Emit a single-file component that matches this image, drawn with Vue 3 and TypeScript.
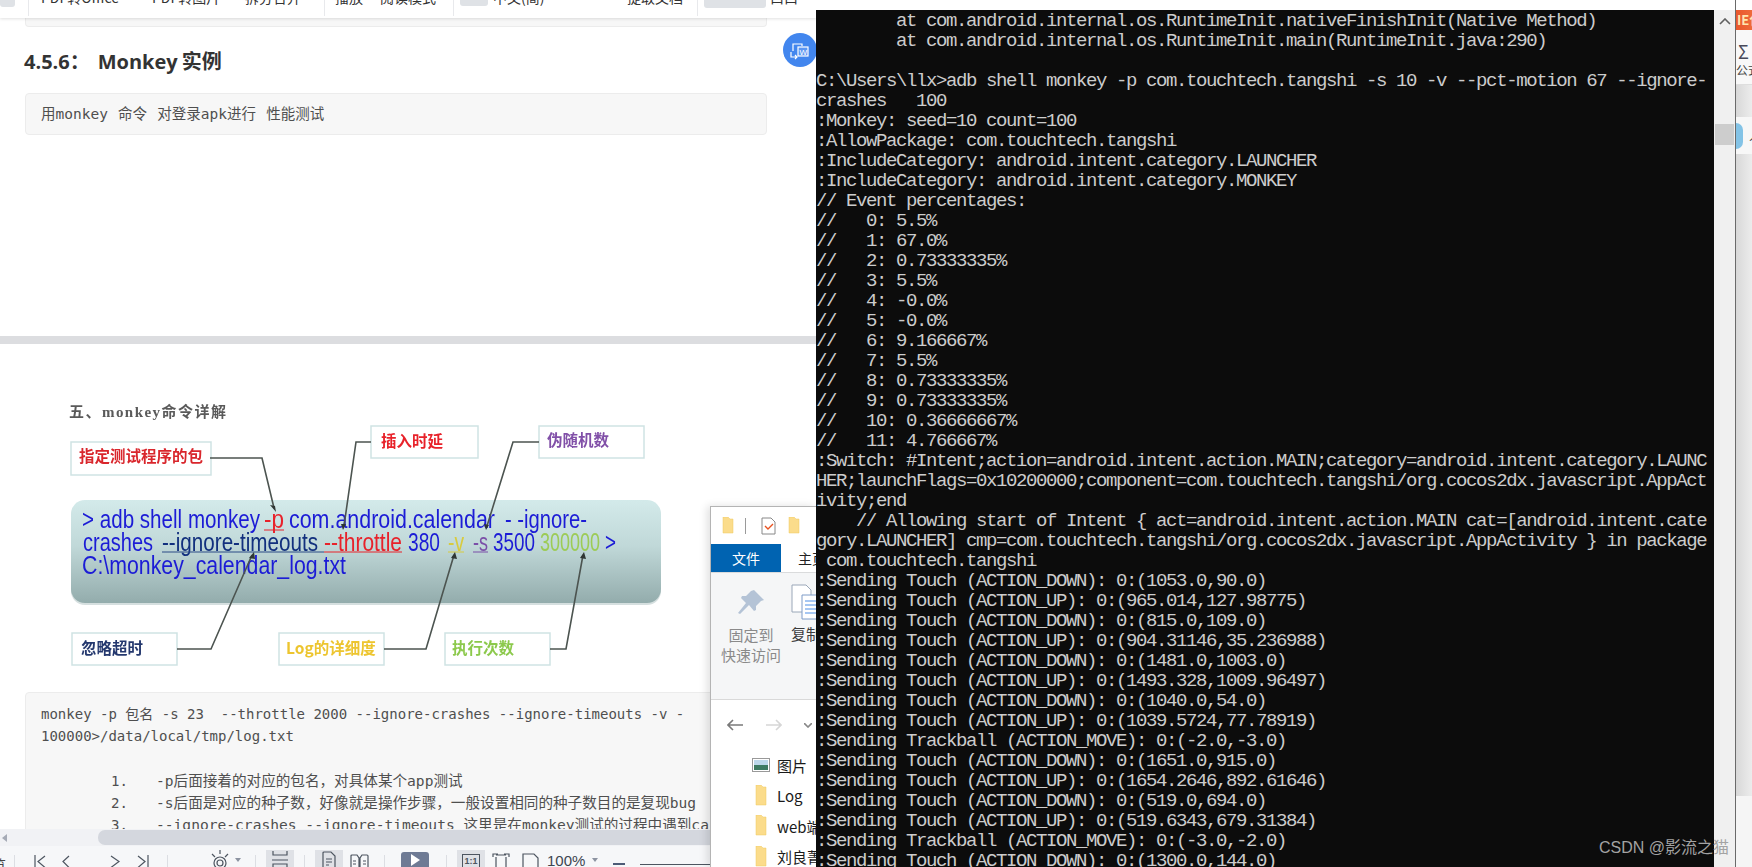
<script setup lang="ts">
// 终端窗口里的输出，每行一条
const terminalLines: string[] = [
  '        at com.android.internal.os.RuntimeInit.nativeFinishInit(Native Method)',
  '        at com.android.internal.os.RuntimeInit.main(RuntimeInit.java:290)',
  '',
  'C:\\Users\\llx>adb shell monkey -p com.touchtech.tangshi -s 10 -v --pct-motion 67 --ignore-',
  'crashes   100',
  ':Monkey: seed=10 count=100',
  ':AllowPackage: com.touchtech.tangshi',
  ':IncludeCategory: android.intent.category.LAUNCHER',
  ':IncludeCategory: android.intent.category.MONKEY',
  '// Event percentages:',
  '//   0: 5.5%',
  '//   1: 67.0%',
  '//   2: 0.73333335%',
  '//   3: 5.5%',
  '//   4: -0.0%',
  '//   5: -0.0%',
  '//   6: 9.166667%',
  '//   7: 5.5%',
  '//   8: 0.73333335%',
  '//   9: 0.73333335%',
  '//   10: 0.36666667%',
  '//   11: 4.766667%',
  ':Switch: #Intent;action=android.intent.action.MAIN;category=android.intent.category.LAUNC',
  'HER;launchFlags=0x10200000;component=com.touchtech.tangshi/org.cocos2dx.javascript.AppAct',
  'ivity;end',
  '    // Allowing start of Intent { act=android.intent.action.MAIN cat=[android.intent.cate',
  'gory.LAUNCHER] cmp=com.touchtech.tangshi/org.cocos2dx.javascript.AppActivity } in package',
  ' com.touchtech.tangshi',
  ':Sending Touch (ACTION_DOWN): 0:(1053.0,90.0)',
  ':Sending Touch (ACTION_UP): 0:(965.014,127.98775)',
  ':Sending Touch (ACTION_DOWN): 0:(815.0,109.0)',
  ':Sending Touch (ACTION_UP): 0:(904.31146,35.236988)',
  ':Sending Touch (ACTION_DOWN): 0:(1481.0,1003.0)',
  ':Sending Touch (ACTION_UP): 0:(1493.328,1009.96497)',
  ':Sending Touch (ACTION_DOWN): 0:(1040.0,54.0)',
  ':Sending Touch (ACTION_UP): 0:(1039.5724,77.78919)',
  ':Sending Trackball (ACTION_MOVE): 0:(-2.0,-3.0)',
  ':Sending Touch (ACTION_DOWN): 0:(1651.0,915.0)',
  ':Sending Touch (ACTION_UP): 0:(1654.2646,892.61646)',
  ':Sending Touch (ACTION_DOWN): 0:(519.0,694.0)',
  ':Sending Touch (ACTION_UP): 0:(519.6343,679.31384)',
  ':Sending Trackball (ACTION_MOVE): 0:(-3.0,-2.0)',
  ':Sending Touch (ACTION_DOWN): 0:(1300.0,144.0)'
];

// 示意图里的引线
const leaders: string[] = [
  '210,458 262,458 274,508',
  '371,442 356,442 344,526',
  '539,442 513,442 487,526',
  '177,649 211,649 252,555',
  '384,649 426,649 454,555',
  '550,649 566,649 583,555'
];

const notes = [
  { no: '1.', text: '-p后面接着的对应的包名，对具体某个app测试' },
  { no: '2.', text: '-s后面是对应的种子数，好像就是操作步骤，一般设置相同的种子数目的是复现bug' },
  { no: '3.', text: '--ignore-crashes --ignore-timeouts 这里是在monkey测试的过程中遇到ca' }
];

const treeFolders = ['Log', 'web端测试', '刘良菁'];
</script>

<template>
  <div class="desktop">
    <!-- 左边的文档阅读器 -->
    <section class="reader">
      <header class="top-bar">
        <div class="top-cell cell-a"><i class="grey-chip chip-a"></i></div>
        <div class="top-cell cell-b">
          <span class="w-111">PDF转Office</span>
          <span class="w-93">PDF转图片</span>
          <span>拆分合并</span>
        </div>
        <div class="top-cell cell-c">
          <span class="w-45">播放</span>
          <span>阅读模式</span>
        </div>
        <div class="top-cell cell-d">
          <i class="grey-chip chip-d"></i>
          <span class="w-134">中文(简)</span>
          <span>提取文档</span>
        </div>
        <div class="top-cell cell-e">
          <i class="grey-chip chip-e"></i>
          <span>口口</span>
        </div>
      </header>

      <div class="page page-one">
        <div class="box-tail"></div>
        <h2 class="section-title">4.5.6：&nbsp; Monkey 实例</h2>
        <div class="quote-box">用monkey 命令 对登录apk进行 性能测试</div>
      </div>

      <div class="page-gap"></div>

      <div class="page page-two">
        <svg class="figure" viewBox="60 400 620 280" width="620" height="280">
          <defs>
            <linearGradient id="band" x1="0" y1="0" x2="0" y2="1">
              <stop offset="0" stop-color="#d3eaea" />
              <stop offset="0.45" stop-color="#c0d8d8" />
              <stop offset="1" stop-color="#93acac" />
            </linearGradient>
          </defs>
          <text x="69" y="417" textLength="157" class="fig-title">五、monkey命令详解</text>

          <rect x="71" y="502" width="590" height="103" rx="14" fill="#b9c9c9" opacity="0.6" />
          <rect x="71" y="500" width="590" height="103" rx="14" fill="url(#band)" />

          <g class="cmd">
            <text x="82" y="528" textLength="178" lengthAdjust="spacingAndGlyphs">&gt; adb shell monkey</text>
            <text x="264" y="528" textLength="20" lengthAdjust="spacingAndGlyphs" fill="#e8222a">-p</text>
            <text x="289" y="528" textLength="206" lengthAdjust="spacingAndGlyphs">com.android.calendar</text>
            <text x="505" y="528" textLength="82" lengthAdjust="spacingAndGlyphs">- -ignore-</text>
            <text x="83" y="551" textLength="70" lengthAdjust="spacingAndGlyphs">crashes</text>
            <text x="162" y="551" textLength="156" lengthAdjust="spacingAndGlyphs" fill="#12307e">--ignore-timeouts</text>
            <text x="324" y="551" textLength="78" lengthAdjust="spacingAndGlyphs" fill="#e8222a">--throttle</text>
            <text x="408" y="551" textLength="32" lengthAdjust="spacingAndGlyphs">380</text>
            <text x="448" y="551" textLength="16" lengthAdjust="spacingAndGlyphs" fill="#d8cb3e">-v</text>
            <text x="473" y="551" textLength="15" lengthAdjust="spacingAndGlyphs" fill="#7b4fa8">-s</text>
            <text x="493" y="551" textLength="42" lengthAdjust="spacingAndGlyphs">3500</text>
            <text x="540" y="551" textLength="60" lengthAdjust="spacingAndGlyphs" fill="#9ccb55">300000</text>
            <text x="605" y="551" textLength="11" lengthAdjust="spacingAndGlyphs">&gt;</text>
            <text x="82" y="574" textLength="264" lengthAdjust="spacingAndGlyphs">C:\monkey_calendar_log.txt</text>
          </g>
          <line x1="264" y1="530" x2="284" y2="530" stroke="#e8222a" />
          <line x1="162" y1="552" x2="324" y2="552" stroke="#2b4a86" />
          <line x1="324" y1="552" x2="402" y2="552" stroke="#e8222a" />
          <line x1="448" y1="552" x2="464" y2="552" stroke="#d8cb3e" />
          <line x1="473" y1="552" x2="488" y2="552" stroke="#7b4fa8" />

          <g class="tag">
            <rect x="71" y="442" width="140" height="33" />
            <rect x="371" y="426" width="107" height="32" />
            <rect x="539" y="426" width="105" height="32" />
            <rect x="72" y="633" width="105" height="32" />
            <rect x="279" y="633" width="105" height="32" />
            <rect x="445" y="633" width="105" height="32" />
          </g>
          <g class="tag-text">
            <text x="79" y="462" fill="#d9262c">指定测试程序的包</text>
            <text x="381" y="447" fill="#e8222a">插入时延</text>
            <text x="547" y="446" fill="#8150a8">伪随机数</text>
            <text x="81" y="654" fill="#24386e">忽略超时</text>
            <text x="286" y="654" fill="#edc52f">Log的详细度</text>
            <text x="452" y="654" fill="#8cc94c">执行次数</text>
          </g>

          <polyline v-for="points in leaders" :key="points" :points="points" class="leader" />
          <path class="head" d="M270 505l5 1 1 6zM341 524l5 0-3 6zM484 524l5 1-3 5zM249 558l5-6 1 7zM451 558l4-6 2 7zM580 558l4-6 2 7z" />
        </svg>

        <div class="code-box">
          <div>monkey -p 包名 -s 23&nbsp; --throttle 2000 --ignore-crashes --ignore-timeouts -v -</div>
          <div>100000&gt;/data/local/tmp/log.txt</div>
          <div class="blank"></div>
          <div v-for="note in notes" :key="note.no" class="note">
            <span class="note-no">{{ note.no }}</span>
            <span class="note-text">{{ note.text }}</span>
          </div>
        </div>
      </div>

      <div class="h-scroll">
        <i class="arrow-left"></i>
        <i class="h-thumb"></i>
      </div>

      <footer class="bottom-bar">
        <span class="cut-word">览</span>
        <i class="tb-sep ml-8"></i>
        <svg class="tb-icon ml-19" width="12" height="13" viewBox="0 0 12 13"><path d="M1 0v13M11 1 4 6.5l7 6" /></svg>
        <svg class="tb-icon ml-16" width="8" height="13" viewBox="0 0 8 13"><path d="M7 1 1 6.5l6 6" /></svg>
        <svg class="tb-icon ml-40" width="10" height="13" viewBox="0 0 10 13"><path d="m1 1 8 5.5-8 6" /></svg>
        <svg class="tb-icon ml-17" width="12" height="13" viewBox="0 0 12 13"><path d="M11 0v13M1 1l7 5.5-7 6" /></svg>
        <i class="tb-sep ml-18"></i>
        <svg class="tb-icon ml-42" width="20" height="18" viewBox="0 0 20 18"><circle cx="10" cy="13" r="6" /><circle cx="10" cy="13" r="3" /><path d="M10 0v4M2 4l3 3M18 4l-3 3" /></svg>
        <i class="caret ml-5"></i>
        <i class="tb-sep ml-14"></i>
        <div class="tb-hi ml-10">
          <svg class="tb-icon" width="18" height="17" viewBox="0 0 18 17"><path d="M2 0v4h14V0M1 9h16M2 17v-4h14v4" /></svg>
        </div>
        <i class="tb-sep ml-10"></i>
        <div class="tb-hi ml-10">
          <svg class="tb-icon" width="14" height="17" viewBox="0 0 14 17"><path d="M1 17V2q0-1 1-1h7l4 4v12M4 8h6M4 11h6M4 14h3" /></svg>
        </div>
        <svg class="tb-icon ml-6" width="21" height="14" viewBox="0 0 21 14"><path d="M2 14V2q0-1 1-1h5l2 3v10M11 14V4l2-3h5q1 0 1 1v12M4 7h3M14 7h3M4 10h3M14 10h3" /></svg>
        <i class="tb-sep ml-14"></i>
        <div class="tb-play ml-16"><i></i></div>
        <i class="tb-sep ml-17"></i>
        <div class="tb-hi ml-10">
          <span class="one-one">1:1</span>
        </div>
        <svg class="tb-icon ml-7" width="18" height="15" viewBox="0 0 18 15"><path d="M1 4V1h5M12 1h5v3M4 4v11M14 4v11M4 2h10" /></svg>
        <svg class="tb-icon ml-12" width="17" height="15" viewBox="0 0 17 15"><path d="M1 15V1h11l4 4v10" /></svg>
        <span class="zoom-text ml-8">100%</span>
        <i class="caret ml-6"></i>
        <i class="minus ml-15"></i>
        <i class="slider ml-15"></i>
      </footer>

      <div class="word-badge">
        <svg width="24" height="24" viewBox="0 0 24 24" fill="none" stroke="#fff" stroke-width="1.2">
          <path d="M5 13V6h9v2" />
          <rect x="10" y="9" width="10" height="9" fill="#5d97f2" />
          <text x="11.4" y="16.6" class="badge-w">W</text>
          <path d="M3 14v5h6m-2-2 2 2-2 2" />
        </svg>
      </div>
    </section>

    <!-- 资源管理器窗口，被终端盖住一半 -->
    <section class="explorer">
      <div class="qat">
        <svg class="folder-icon" width="12" height="17" viewBox="0 0 12 17"><path d="M1 0h5l2 2h3v14H1z" /></svg>
        <i class="qat-sep"></i>
        <svg width="15" height="18" viewBox="0 0 15 18"><path d="M1 1h9l4 4v12H1z" fill="#fff" stroke="#888" /><path d="m4 9 3 3 5-5" fill="none" stroke="#e8521f" stroke-width="1.4" /></svg>
        <svg class="folder-icon" width="12" height="17" viewBox="0 0 12 17"><path d="M1 0h5l2 2h3v14H1z" /></svg>
      </div>
      <div class="tabs">
        <span class="tab-file">文件</span>
        <span class="tab-home">主页</span>
      </div>
      <div class="ribbon">
        <div class="ribbon-btn pin-btn">
          <svg width="28" height="28" viewBox="0 0 28 28"><path d="M17 1l10 10-3 1-5 5 0 4-2 1-5-6-9 9-2-1 8-10-5-5 1-2 4 0 5-5z" fill="#b4c3d6" /></svg>
          <span>固定到</span>
          <span>快速访问</span>
        </div>
        <div class="ribbon-btn copy-btn">
          <svg width="30" height="36" viewBox="0 0 30 36"><path d="M1 1h14l5 5v22H1z" fill="#fff" stroke="#9aa7b8" /><path d="M11 11h18v24H11z" fill="#fff" stroke="#7f9cc8" /><path d="M14 17h13M14 21h13M14 25h13M14 29h13" stroke="#4f8fe6" /></svg>
          <span>复制</span>
        </div>
      </div>
      <div class="nav-row">
        <svg width="16" height="12" viewBox="0 0 16 12" class="nav-back"><path d="M16 6H2m4-5L1 6l5 5" /></svg>
        <svg width="16" height="12" viewBox="0 0 16 12" class="nav-next"><path d="M0 6h14m-4-5 5 5-5 5" /></svg>
        <svg width="8" height="5" viewBox="0 0 8 5" class="nav-down"><path d="m0 0 4 4 4-4" /></svg>
      </div>
      <ul class="tree">
        <li>
          <svg width="18" height="14" viewBox="0 0 18 14"><rect x="0.5" y="0.5" width="17" height="13" fill="#fff" stroke="#999" /><rect x="2" y="2" width="14" height="5" fill="#bcd7ea" /><rect x="2" y="7" width="14" height="5" fill="#3d7a62" /></svg>
          <span>图片</span>
        </li>
        <li v-for="name in treeFolders" :key="name">
          <svg class="folder-icon tree-folder" width="12" height="22" viewBox="0 0 12 22"><path d="M1 0h5l2 2h3v18H1z" /></svg>
          <span>{{ name }}</span>
        </li>
      </ul>
    </section>

    <!-- 命令行窗口 -->
    <section class="terminal">
      <div class="term-title"></div>
      <div class="term-main">
        <div class="term-body">
          <div v-for="(line, index) in terminalLines" :key="index" class="term-line">{{ line }}</div>
        </div>
        <div class="term-scroll">
          <svg width="12" height="7" viewBox="0 0 12 7"><path d="m1 6 5-5 5 5" fill="none" stroke="#606060" stroke-width="1.6" /></svg>
          <i class="term-thumb"></i>
        </div>
      </div>
    </section>

    <!-- 最右边露出的另一个窗口 -->
    <aside class="side-sliver">
      <div class="sliver-top"></div>
      <div class="sliver-banner">IE包</div>
      <div class="sliver-tool">
        <span class="sigma">Σ</span>
        <span class="formula">公式</span>
      </div>
      <div class="sliver-grey"></div>
      <div class="sliver-card"><i class="sliver-dot"></i><span>人</span></div>
      <div class="sliver-grey sliver-long"></div>
      <div class="sliver-end"></div>
    </aside>

    <div class="watermark">CSDN @影流之猫</div>
  </div>
</template>

<style scoped>
.desktop {
  position: relative;
  width: 1752px;
  height: 867px;
  overflow: hidden;
  background: #fff;
  font-family: "Noto Sans CJK SC", "Noto Sans", sans-serif;
}

/* 阅读器 */
.reader {
  position: absolute;
  left: 0;
  top: 0;
  width: 816px;
  height: 867px;
  display: flex;
  flex-direction: column;
  overflow: hidden;
}

.top-bar {
  flex: none;
  height: 18px;
  display: flex;
  overflow: hidden;
  background: #fff;
  box-shadow: 0 1px 3px rgba(0, 0, 0, 0.12);
  position: relative;
  z-index: 1;
  font-size: 14px;
  line-height: 20px;
  color: #333;
}

.top-cell {
  display: flex;
  align-items: flex-start;
  height: 16px;
  border-left: 1px solid #e8e9ec;
  box-sizing: border-box;
}

.top-cell span {
  margin-top: -13px;
  white-space: nowrap;
}

.cell-a { width: 28px; border-left: none; }
.cell-b { width: 296px; padding-left: 12px; }
.cell-c { width: 129px; padding-left: 10px; }
.cell-d { width: 244px; padding-left: 6px; }
.cell-e { width: 119px; padding-left: 6px; }

.w-111 { width: 111px; }
.w-93 { width: 93px; }
.w-45 { width: 45px; }
.w-134 { width: 134px; margin-left: 5px; }

.grey-chip {
  display: block;
  flex: none;
  background: #dfe2e6;
  border-radius: 0 0 3px 3px;
}

.chip-a { width: 15px; height: 7px; }
.chip-d { width: 28px; height: 6px; }
.chip-e { width: 62px; height: 8px; margin-right: 4px; }

.page {
  background: #fff;
}

.page-one {
  flex: none;
  height: 318px;
}

.box-tail {
  width: 742px;
  height: 9px;
  margin-left: 25px;
  box-sizing: border-box;
  background: #f7f7f7;
  border: 1px solid #ececec;
  border-top: none;
  border-radius: 0 0 4px 4px;
}

.section-title {
  margin: 20px 0 0 24px;
  height: 37px;
  font-size: 20px;
  line-height: 30px;
  font-weight: 700;
  word-spacing: -1.2px;
  color: #333;
  font-family: "Open Sans", "Noto Sans CJK SC", sans-serif;
}

.quote-box {
  margin: 0 0 0 25px;
  width: 742px;
  height: 42px;
  box-sizing: border-box;
  margin-top: 9px;
  padding: 0 15px;
  background: #f7f7f7;
  border: 1px solid #ececec;
  border-radius: 4px;
  font-family: "DejaVu Sans Mono", "Noto Sans CJK SC", monospace;
  font-size: 14.5px;
  word-spacing: 1.5px;
  line-height: 40px;
  color: #4f4f4f;
  white-space: pre;
}

.page-gap {
  flex: none;
  height: 8px;
  background: #dcdde0;
}

.page-two {
  flex: 1;
  min-height: 0;
  overflow: hidden;
}

.figure {
  display: block;
  margin: 56px 0 0 60px;
  filter: blur(0.5px);
}

.fig-title {
  font-family: "Liberation Serif", "Noto Sans CJK SC", serif;
  font-size: 15px;
  font-weight: 700;
  fill: #5a5a5a;
}

.cmd text {
  font-family: "Liberation Sans", sans-serif;
  font-size: 25px;
  fill: #1c1cd6;
}

.cmd text[fill="#e8222a"] { fill: #e8222a; }
.cmd text[fill="#12307e"] { fill: #12307e; }
.cmd text[fill="#d8cb3e"] { fill: #d8cb3e; }
.cmd text[fill="#7b4fa8"] { fill: #7b4fa8; }
.cmd text[fill="#9ccb55"] { fill: #9ccb55; }

.tag rect {
  fill: #fff;
  stroke: #cfe3e4;
  stroke-width: 1.5;
}

.tag-text text {
  font-size: 15.5px;
  font-weight: 700;
}

.leader {
  fill: none;
  stroke: #4c5450;
  stroke-width: 1.6;
}

.head {
  fill: #2f3634;
}

.code-box {
  margin: 12px 0 0 25px;
  width: 742px;
  box-sizing: border-box;
  padding: 10px 15px 0;
  background: #f7f7f7;
  border: 1px solid #ececec;
  border-radius: 4px;
  font-family: "DejaVu Sans Mono", "Noto Sans CJK SC", monospace;
  font-size: 14px;
  line-height: 22px;
  color: #4f4f4f;
  white-space: nowrap;
}

.blank {
  height: 23px;
}

.note {
  display: flex;
  line-height: 22px;
}

.note-no {
  width: 45px;
  margin-left: 70px;
  flex: none;
}

.note-text {
  font-size: 14.6px;
}

.h-scroll {
  flex: none;
  height: 17px;
  display: flex;
  align-items: center;
  background: #f1f2f5;
  position: relative;
  z-index: 1;
}

.arrow-left {
  width: 0;
  height: 0;
  margin-left: 2px;
  border: 4px solid transparent;
  border-right: 5px solid #a6abb6;
  border-left: none;
}

.h-thumb {
  margin-left: 91px;
  flex: 1;
  height: 15px;
  background: #d4d7de;
  border-radius: 7px 0 0 7px;
}

.bottom-bar {
  flex: none;
  height: 21px;
  display: flex;
  align-items: flex-end;
  overflow: hidden;
  background: #f6f7f9;
  position: relative;
  z-index: 1;
}

.cut-word {
  width: 14px;
  margin-left: -8px;
  font-size: 14px;
  line-height: 14px;
  margin-bottom: -4px;
  color: #444;
}

.tb-sep {
  flex: none;
  width: 1px;
  height: 12px;
  background: #dcdee3;
}

.tb-icon {
  flex: none;
  margin-bottom: -1px;
  fill: none;
  stroke: #4d5560;
  stroke-width: 1.2;
}

.tb-hi {
  flex: none;
  width: 28px;
  height: 17px;
  display: flex;
  align-items: flex-end;
  justify-content: center;
  background: #dfe1e6;
}

.tb-play {
  flex: none;
  width: 28px;
  height: 15px;
  display: flex;
  align-items: flex-end;
  justify-content: center;
  background: #6e7a94;
  border-radius: 3px 3px 0 0;
}

.tb-play i {
  width: 0;
  height: 0;
  margin-bottom: 1px;
  border-left: 9px solid #fff;
  border-top: 6px solid transparent;
  border-bottom: 6px solid transparent;
}

.one-one {
  width: 18px;
  height: 13px;
  box-sizing: border-box;
  border: 1px solid #4d5560;
  border-bottom: none;
  font-family: "Liberation Sans", sans-serif;
  font-size: 9px;
  font-weight: 700;
  line-height: 13px;
  text-align: center;
  color: #4d5560;
}

.zoom-text {
  width: 39px;
  font-family: "Liberation Sans", sans-serif;
  font-size: 15px;
  line-height: 16px;
  margin-bottom: -2px;
  color: #3d4550;
}

.caret {
  flex: none;
  width: 0;
  height: 0;
  margin-bottom: 5px;
  border-top: 4px solid #8c93a1;
  border-left: 3px solid transparent;
  border-right: 3px solid transparent;
}

.minus {
  flex: none;
  width: 12px;
  height: 2px;
  margin-bottom: 2px;
  background: #4d5b76;
}

.slider {
  flex: none;
  width: 70px;
  height: 1px;
  margin-bottom: 2px;
  background: #4d5560;
}

.ml-5 { margin-left: 5px; }
.ml-6 { margin-left: 6px; }
.ml-7 { margin-left: 7px; }
.ml-8 { margin-left: 8px; }
.ml-10 { margin-left: 10px; }
.ml-12 { margin-left: 12px; }
.ml-14 { margin-left: 14px; }
.ml-15 { margin-left: 15px; }
.ml-16 { margin-left: 16px; }
.ml-17 { margin-left: 17px; }
.ml-18 { margin-left: 18px; }
.ml-19 { margin-left: 19px; }
.ml-40 { margin-left: 40px; }
.ml-42 { margin-left: 42px; }

.word-badge {
  position: absolute;
  left: 783px;
  top: 33px;
  width: 34px;
  height: 34px;
  display: flex;
  align-items: center;
  justify-content: center;
  border-radius: 50%;
  background: #4286ee;
  z-index: 2;
}

.badge-w {
  font-family: "Liberation Sans", sans-serif;
  font-size: 8px;
  fill: #fff;
  stroke: none;
}

/* 资源管理器 */
.explorer {
  position: absolute;
  left: 710px;
  top: 506px;
  width: 106px;
  height: 361px;
  box-sizing: border-box;
  overflow: hidden;
  background: #fff;
  border-left: 1px solid #b4b4b4;
  border-top: 1px solid #b4b4b4;
  box-shadow: -3px 0 8px rgba(0, 0, 0, 0.12);
  z-index: 3;
}

.qat {
  height: 37px;
  display: flex;
  align-items: center;
  padding-left: 11px;
  gap: 11px;
}

.qat-sep {
  width: 1px;
  height: 16px;
  background: #9a9a9a;
  margin-right: 4px;
}

.folder-icon path {
  fill: #fbdc8b;
  stroke: #efc862;
  stroke-width: 0.5;
}

.qat svg:last-child {
  margin-left: 1px;
}

.tabs {
  height: 28px;
  display: flex;
  font-size: 14px;
  line-height: 28px;
}

.tab-file {
  flex: none;
  width: 70px;
  text-align: center;
  background: #0063b1;
  color: #fff;
}

.tab-home {
  flex: none;
  padding-left: 17px;
  color: #222;
  white-space: nowrap;
}

.ribbon {
  height: 128px;
  box-sizing: border-box;
  display: flex;
  background: #f5f6f7;
  border-top: 1px solid #dadbdc;
  border-bottom: 1px solid #d9d9d9;
  font-size: 15px;
  line-height: 20px;
}

.ribbon-btn {
  display: flex;
  flex-direction: column;
  align-items: center;
  flex: none;
  white-space: nowrap;
}

.pin-btn {
  width: 80px;
  padding-top: 16px;
  color: #8a8a8a;
}

.pin-btn svg {
  margin-bottom: 8px;
}

.copy-btn {
  width: 40px;
  margin-left: -5px;
  padding-top: 11px;
  color: #3c3c3c;
}

.copy-btn svg {
  margin-bottom: 4px;
}

.nav-row {
  height: 50px;
  display: flex;
  align-items: center;
  padding-left: 16px;
}

.nav-row svg {
  fill: none;
  stroke-width: 1.6;
}

.nav-back { stroke: #7a7a7a; }
.nav-next { stroke: #d6d6d6; margin-left: 23px; }
.nav-down { stroke: #888; margin-left: 22px; }

.tree {
  list-style: none;
  margin: 0;
  padding: 0 0 0 41px;
  font-size: 15px;
  color: #1a1a1a;
}

.tree li {
  height: 30.5px;
  display: flex;
  align-items: center;
  white-space: nowrap;
}

.tree li svg {
  flex: none;
}

.tree li span {
  margin-left: 7px;
}

.tree-folder {
  margin: 0 3px;
}

/* 命令行 */
.terminal {
  position: absolute;
  left: 816px;
  top: 0;
  width: 920px;
  height: 867px;
  box-sizing: border-box;
  display: flex;
  flex-direction: column;
  background: #fff;
  border-right: 1px solid #6a6a6a;
  z-index: 4;
}

.term-title {
  flex: none;
  height: 10px;
}

.term-main {
  flex: 1;
  min-height: 0;
  display: flex;
}

.term-body {
  width: 898px;
  flex: none;
  box-sizing: border-box;
  padding-top: 1px;
  overflow: hidden;
  background: #0c0c0c;
  color: #cccccc;
  font-family: "Liberation Mono", monospace;
  font-size: 19px;
  letter-spacing: -1.4px;
  line-height: 20px;
}

.term-line {
  height: 20px;
  white-space: pre;
}

.term-scroll {
  flex: 1;
  display: flex;
  flex-direction: column;
  align-items: center;
  padding-top: 8px;
  background: #f0f0f0;
}

.term-thumb {
  width: 19px;
  height: 21px;
  margin-top: 99px;
  background: #cdcdcd;
}

/* 右侧窗口 */
.side-sliver {
  position: absolute;
  left: 1736px;
  top: 0;
  width: 16px;
  height: 867px;
  display: flex;
  flex-direction: column;
  overflow: hidden;
  background: #fff;
}

.sliver-top {
  flex: none;
  height: 10px;
}

.sliver-banner {
  flex: none;
  height: 20px;
  padding-left: 1px;
  background: linear-gradient(90deg, #e9572c, #ee6a3a);
  color: #ffe6b0;
  font-size: 13px;
  font-weight: 700;
  line-height: 20px;
  white-space: nowrap;
}

.sliver-tool {
  flex: none;
  height: 55px;
  display: flex;
  flex-direction: column;
  box-sizing: border-box;
  padding-left: 2px;
  background: #f8f8f8;
  border-bottom: 1px solid #dedede;
  white-space: nowrap;
}

.sigma {
  margin-top: 11px;
  font-size: 18px;
  line-height: 20px;
  color: #48495a;
}

.formula {
  margin-top: 2px;
  margin-left: -2px;
  font-size: 12px;
  line-height: 14px;
  color: #444;
}

.sliver-grey {
  flex: none;
  height: 32px;
  background: linear-gradient(90deg, #d8d8d8, #ececec);
}

.sliver-card {
  flex: none;
  height: 37px;
  display: flex;
  align-items: center;
  background: #f7f7f7;
  font-size: 12px;
  color: #333;
  white-space: nowrap;
}

.sliver-dot {
  flex: none;
  width: 7px;
  height: 26px;
  background: #83c3e6;
  border-radius: 0 13px 13px 0;
  margin-right: 6px;
}

.sliver-long {
  height: 642px;
}

.sliver-end {
  flex: 1;
  background: #f5f5f5;
}

.watermark {
  position: absolute;
  left: 1599px;
  top: 838px;
  z-index: 5;
  font-family: "Liberation Sans", "Noto Sans CJK SC", sans-serif;
  font-size: 16px;
  line-height: 20px;
  color: #a3a3a3;
  white-space: nowrap;
}
</style>

<style>
html,
body {
  margin: 0;
  background: #fff;
}
</style>
